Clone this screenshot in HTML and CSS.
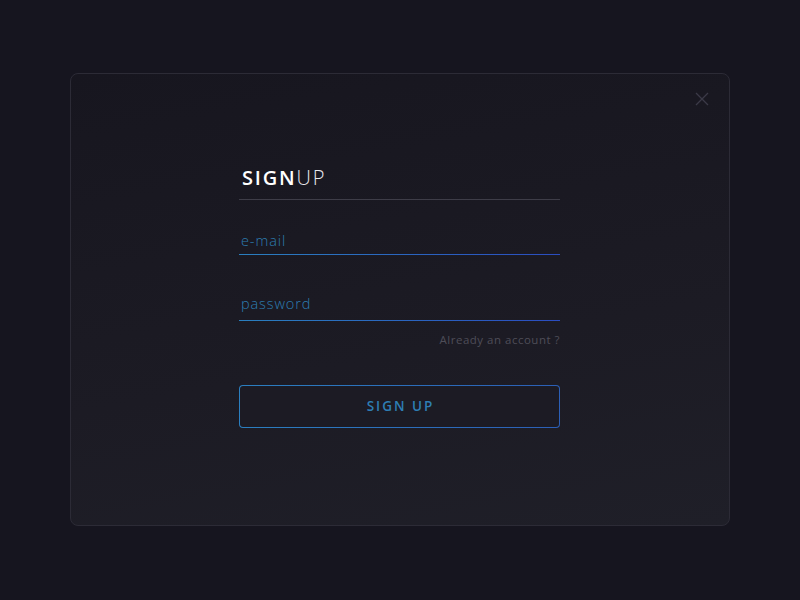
FILE: index.html
```html
<!DOCTYPE html>
<html>
<head>
<meta charset="utf-8">
<link rel="stylesheet" href="styles.css">
</head>
<body>
<div class="page">
  <div class="card">
    <button class="close" aria-label="close">
      <svg width="14" height="14" viewBox="0 0 14 14"><path d="M1 1L13 13M13 1L1 13" stroke="#3b3a47" stroke-width="1.3" fill="none"/></svg>
    </button>
    <form class="form">
      <h1 class="title"><span class="bold">SIGN</span><span class="light">UP</span></h1>
      <div class="field"><span class="placeholder">e-mail</span></div>
      <div class="field field2"><span class="placeholder">password</span></div>
      <div class="already">Already an account ?</div>
      <div class="btn"><span>SIGN UP</span></div>
    </form>
  </div>
</div>
</body>
</html>
```
FILE: styles.css
```css
html, body {
  margin: 0;
  padding: 0;
  background: #16151f;
  font-family: "Open Sans", "Noto Sans", sans-serif;
}
.page {
  width: 800px;
  height: 600px;
  padding-top: 73px;
  box-sizing: border-box;
}
.card {
  position: relative;
  margin-left: 70px;
  width: 660px;
  height: 453px;
  box-sizing: border-box;
  border: 1px solid #2c2b36;
  border-radius: 8px;
  background: linear-gradient(170deg, #17161f 0%, #1c1b24 60%, #1f1f28 100%);
  display: flex;
  justify-content: center;
  padding-top: 90px;
}
.close {
  position: absolute;
  top: 18px;
  right: 20px;
  background: none;
  border: 0;
  padding: 0;
  width: 14px;
  height: 14px;
}
.close svg { display: block; }
.form {
  width: 321px;
  display: flex;
  flex-direction: column;
  margin-left: -1px;
}
.title {
  margin: 0;
  font-size: 20px;
  line-height: 28px;
  letter-spacing: 1.8px;
  color: #fff;
  padding-left: 3px;
  padding-bottom: 7px;
  border-bottom: 1px solid #3e3d48;
  font-weight: 400;
}
.bold { font-weight: 600; }
.light { font-weight: 300; color: #e8e8ee; }
.field {
  margin-top: 27px;
  height: 27px;
  display: flex;
  align-items: center;
  padding-left: 2px;
  padding-bottom: 1px;
  background: linear-gradient(90deg, #2a7fbf, #2b4dc0) bottom / 100% 1px no-repeat;
}
.field2 { margin-top: 37px; height: 22px; padding-bottom: 7px; }
.placeholder {
  font-size: 14.5px;
  letter-spacing: 0.9px;
  color: #2d7db2;
  font-weight: 300;
}
.already {
  margin-top: 11px;
  text-align: right;
  font-size: 11.5px;
  letter-spacing: 0.5px;
  color: #4e4d58;
}
.btn {
  margin-top: 38px;
  height: 43px;
  box-sizing: border-box;
  border-radius: 4px;
  border: 1px solid transparent;
  background:
    linear-gradient(#1c1b24, #1c1b24) padding-box,
    linear-gradient(90deg, #2b7fc0, #2c5fb6) border-box;
  display: flex;
  align-items: center;
  justify-content: center;
  padding-left: 2px;
  padding-bottom: 2px;
}
.btn span {
  font-size: 13.5px;
  font-weight: 600;
  letter-spacing: 2px;
  color: #2e7eb4;
}
```
